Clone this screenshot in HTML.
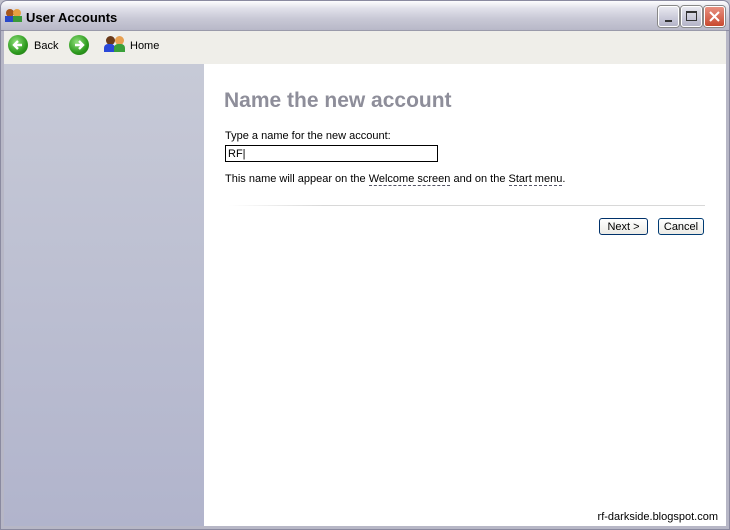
<!DOCTYPE html>
<html><head><style>
*{margin:0;padding:0;box-sizing:border-box}
body{width:730px;height:530px;overflow:hidden;font-family:Tahoma,"Liberation Sans",sans-serif;font-size:11px;background:#c0c0cc;position:relative}
.title{position:absolute;left:0;top:0;width:730px;height:30px;background:linear-gradient(#fdfdfe 0%,#e1e1ea 25%,#c9c9d6 60%,#b8b8c8 100%);border-radius:7px 7px 0 0;border:1px solid #8a8aa0;border-bottom:none}
.title span{position:absolute;left:25px;top:9px;font-weight:bold;font-size:13px;color:#000}
.frame{position:absolute;left:0;top:30px;width:730px;height:500px;background:#b7b7c6;border:1px solid #8a8aa0}
.tb{position:absolute;left:4px;top:30px;width:722px;height:34px;background:#efeee9;border-top:1px solid #9a9aaa}
.left{position:absolute;left:4px;top:64px;width:200px;height:462px;background:linear-gradient(#c7cad7,#b1b4cc)}
.main{position:absolute;left:204px;top:64px;width:522px;height:462px;background:#fff}
.btn{position:absolute;width:21px;height:21px;border-radius:3px;border:1px solid #fff;box-shadow:0 0 0 1px #888}
.circ{position:absolute;width:20px;height:20px;border-radius:50%;background:radial-gradient(circle at 40% 35%,#8fe07a,#2d9a1e 60%,#1c6b12);}
.circ svg{position:absolute;left:0;top:0}
.pb{position:absolute;height:17px;border:1px solid #00316a;border-radius:3px;background:linear-gradient(#fff,#ecebe6);font-size:11px;text-align:center;line-height:16px}
.dot{border-bottom:1px dashed #556}
</style></head><body>
<div class="frame"></div>
<div class="title"><span>User Accounts</span>
<div style="position:absolute;left:5px;top:8px;width:8px;height:8px;border-radius:50%;background:#a5551c"></div>
<div style="position:absolute;left:12px;top:8px;width:8px;height:8px;border-radius:50%;background:#e6a040"></div>
<div style="position:absolute;left:4px;top:15px;width:9px;height:6px;background:#2a48c8"></div>
<div style="position:absolute;left:12px;top:15px;width:9px;height:6px;background:#3a9a3a"></div>
</div>
<div class="btn" style="left:658px;top:6px;background:linear-gradient(#e8e8f0,#b4b4c8)"><div style="position:absolute;left:6px;top:13px;width:7px;height:2px;background:#333"></div></div>
<div class="btn" style="left:681px;top:6px;background:linear-gradient(#e8e8f0,#b4b4c8)"><div style="position:absolute;left:4px;top:4px;width:11px;height:10px;border:1px solid #333;border-top-width:2px"></div></div>
<div class="btn" style="left:704px;top:6px;background:linear-gradient(#e89080,#c84a30)"><svg width="19" height="19"><path d="M5 5L14 14M14 5L5 14" stroke="#fff" stroke-width="2"/></svg></div>
<div class="tb">
<div class="circ" style="left:4px;top:4px"><svg width="20" height="20"><path d="M14 10H6M10 6L6 10L10 14" stroke="#fff" stroke-width="2.4" fill="none"/></svg></div>
<span style="position:absolute;left:30px;top:9px">Back</span>
<div class="circ" style="left:65px;top:4px"><svg width="20" height="20"><path d="M6 10H14M10 6L14 10L10 14" stroke="#fff" stroke-width="2.4" fill="none"/></svg></div>
<div style="position:absolute;left:102px;top:5px;width:9px;height:9px;border-radius:50%;background:#6a3a1a"></div>
<div style="position:absolute;left:111px;top:5px;width:9px;height:9px;border-radius:50%;background:#e8a050"></div>
<div style="position:absolute;left:100px;top:13px;width:11px;height:8px;border-radius:4px 4px 0 0;background:#2a48d8"></div>
<div style="position:absolute;left:110px;top:13px;width:11px;height:8px;border-radius:4px 4px 0 0;background:#3aa03a"></div>
<span style="position:absolute;left:126px;top:9px">Home</span>
</div>
<div class="left"></div>
<div class="main">
<div style="position:absolute;left:20px;top:25px;font-size:21px;font-weight:bold;color:#8e8e9a;font-family:'Liberation Sans',sans-serif">Name the new account</div>
<div style="position:absolute;left:21px;top:66px">Type a name for the new account:</div>
<div style="position:absolute;left:21px;top:81px;width:213px;height:17px;border:1px solid #000;padding-left:2px;line-height:16px">RF|</div>
<div style="position:absolute;left:21px;top:109px">This name will appear on the <span class="dot">Welcome screen</span> and on the <span class="dot">Start menu</span>.</div>
<div style="position:absolute;left:25px;top:141px;width:476px;height:1px;background:linear-gradient(90deg,#fff,#d8d8d8 20%,#d8d8d8)"></div>
<div class="pb" style="left:395px;top:154px;width:49px">Next &gt;</div>
<div class="pb" style="left:454px;top:154px;width:46px;border-color:#003c74">Cancel</div>
<div style="position:absolute;right:8px;top:447px;font-size:11px">rf-darkside.blogspot.com</div>
</div>
</body></html>
